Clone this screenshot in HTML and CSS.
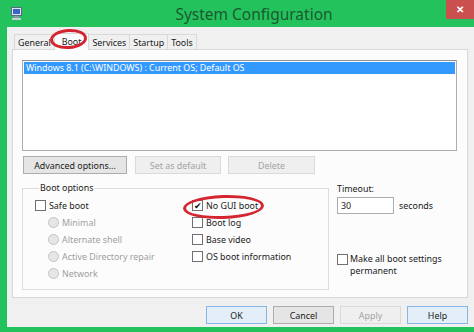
FILE: index.html
```html
<!DOCTYPE html>
<html lang="en">
<head>
    <meta charset="UTF-8">
    <title>System Configuration</title>
    <link rel="stylesheet" href="styles.css">
</head>
<body>
    <div class="window">
        <!-- Title bar -->
        <div class="titlebar">
            <svg class="app-icon" width="11" height="13" viewBox="0 0 11 13">
                <rect x="0.5" y="0.5" width="10" height="8" fill="#dfe6f0" stroke="#5a6a80"/>
                <rect x="2" y="2" width="7" height="5" fill="#3b64c8"/>
                <rect x="3" y="9" width="5" height="2" fill="#8c96a4"/>
                <rect x="1" y="11" width="9" height="2" fill="#c9cfd8"/>
            </svg>
            <div class="title">System Configuration</div>
            <div class="close">&#x2715;</div>
        </div>

        <div class="client">
            <div class="tabs">
                <div class="tab">General</div>
                <div class="tab active">Boot</div>
                <div class="tab">Services</div>
                <div class="tab">Startup</div>
                <div class="tab">Tools</div>
            </div>

            <div class="panel">
                <div class="listbox">
                    <div class="list-item selected">Windows 8.1 (C:\WINDOWS) : Current OS; Default OS</div>
                </div>

                <div class="button-row">
                    <button class="btn btn-advanced">Advanced options...</button>
                    <button class="btn btn-default" disabled>Set as default</button>
                    <button class="btn btn-delete" disabled>Delete</button>
                </div>

                <div class="options-row">
                    <fieldset class="groupbox">
                        <legend>Boot options</legend>
                        <div class="columns">
                            <div class="col col-left">
                                <div class="opt"><span class="check"></span>Safe boot</div>
                                <div class="opt sub disabled"><span class="radio"></span>Minimal</div>
                                <div class="opt sub disabled"><span class="radio"></span>Alternate shell</div>
                                <div class="opt sub disabled"><span class="radio"></span>Active Directory repair</div>
                                <div class="opt sub disabled"><span class="radio"></span>Network</div>
                            </div>
                            <div class="col col-right">
                                <div class="opt"><span class="check checked">&#x2714;</span>No GUI boot</div>
                                <div class="opt"><span class="check"></span>Boot log</div>
                                <div class="opt"><span class="check"></span>Base video</div>
                                <div class="opt"><span class="check"></span>OS boot information</div>
                            </div>
                        </div>
                    </fieldset>

                    <div class="side">
                        <div class="timeout-label">Timeout:</div>
                        <div class="timeout-row">
                            <div class="textbox">30</div>
                            <span>seconds</span>
                        </div>
                        <div class="permanent">
                            <span class="check"></span>
                            <span>Make all boot settings<br>permanent</span>
                        </div>
                    </div>
                </div>
            </div>

            <div class="footer">
                <button class="btn btn-foot btn-focus">OK</button>
                <button class="btn btn-foot">Cancel</button>
                <button class="btn btn-foot" disabled>Apply</button>
                <button class="btn btn-foot btn-focus">Help</button>
            </div>
        </div>

        <!-- red marks drawn over the screenshot -->
        <div class="mark mark-tab"></div>
        <div class="mark mark-nogui"></div>
    </div>
</body>
</html>
```

FILE: styles.css
```css
body {
    margin: 0;
    font-family: "Noto Sans", sans-serif;
    font-size: 8.9px;
    color: #1a1a1a;
}
.window {
    position: relative;
    width: 474px;
    height: 332px;
    background-color: #24c25c;
    box-sizing: border-box;
    padding: 0 0 5px 7px;
    overflow: hidden;
}
.titlebar {
    height: 27px;
    display: flex;
    align-items: flex-start;
    margin-left: -7px;
}
.app-icon {
    margin: 7px 0 0 11px;
}
.title {
    flex: 1;
    text-align: center;
    font-size: 15.5px;
    color: #1c5a30;
    padding-top: 3px;
    padding-left: 40px;
}
.close {
    width: 28px;
    height: 19px;
    background-color: #c9504f;
    color: #fff;
    font-size: 10px;
    font-weight: bold;
    text-align: center;
    line-height: 19px;
}
.client {
    background-color: #f0f0f0;
    height: 300px;
    padding: 6px 6px 0 5px;
    box-sizing: border-box;
}
.tabs {
    display: flex;
    padding-left: 2px;
    height: 16px;
    align-items: flex-end;
}
.tab {
    border: 1px solid #d9d9d9;
    border-bottom: none;
    background-color: #f0f0f0;
    height: 15px;
    line-height: 15px;
    padding: 0 3px;
    margin-right: -1px;
    box-sizing: border-box;
}
.tab.active {
    background-color: #fcfcfc;
    height: 17px;
    margin-bottom: -1px;
    padding: 0 7px;
    position: relative;
}
.panel {
    background-color: #fcfcfc;
    border: 1px solid #d9d9d9;
    height: 249px;
    box-sizing: border-box;
    padding: 10px 10px 0 9px;
}
.listbox {
    height: 91px;
    background-color: #fff;
    border: 1px solid #abadb3;
    border-top-color: #8c8f96;
    padding: 1px;
    box-sizing: border-box;
}
.list-item {
    height: 12px;
    line-height: 12px;
    padding-left: 2px;
}
.list-item.selected {
    background-color: #3399ff;
    color: #fff;
}
.button-row {
    display: flex;
    margin-top: 5px;
    padding-left: 1px;
}
.btn {
    font-family: inherit;
    font-size: 8.9px;
    height: 18px;
    padding: 0;
    background-color: #e5e5e5;
    border: 1px solid #adadad;
    color: #1a1a1a;
    box-sizing: border-box;
}
.btn:disabled {
    background-color: #efefef;
    border-color: #dadada;
    color: #a3a3a3;
}
.btn-advanced {
    width: 104px;
}
.btn-default {
    width: 86px;
    margin-left: 8px;
}
.btn-delete {
    width: 87px;
    margin-left: 7px;
}
.options-row {
    display: flex;
    margin-top: 8px;
}
.groupbox {
    width: 307px;
    height: 108px;
    margin: 0;
    padding: 3px 0 0 12px;
    border: 1px solid #dcdcdc;
    box-sizing: border-box;
}
.groupbox legend {
    padding: 0 1px;
    margin-left: 4px;
    line-height: 12px;
}
.columns {
    display: flex;
}
.col-left {
    width: 157px;
}
.opt {
    display: flex;
    align-items: center;
    height: 17px;
}
.opt.sub {
    padding-left: 13px;
}
.disabled {
    color: #a0a0a0;
}
.check {
    width: 11px;
    height: 11px;
    border: 1px solid #707070;
    background-color: #fff;
    box-sizing: border-box;
    margin-right: 3px;
    flex-shrink: 0;
    font-size: 9px;
    line-height: 9px;
    text-align: center;
    color: #111;
}
.radio {
    width: 11px;
    height: 11px;
    border: 1px solid #c4c4c4;
    border-radius: 50%;
    background-color: #e6e6e6;
    box-sizing: border-box;
    margin-right: 3px;
}
.side {
    padding-left: 8px;
    padding-top: 1px;
}
.timeout-label {
    line-height: 12px;
}
.timeout-row {
    display: flex;
    align-items: center;
    margin-top: 2px;
}
.textbox {
    width: 57px;
    height: 17px;
    border: 1px solid #abadb3;
    background-color: #fff;
    box-sizing: border-box;
    padding-left: 3px;
    line-height: 15px;
    margin-right: 5px;
}
.permanent {
    display: flex;
    align-items: flex-start;
    margin-top: 39px;
    line-height: 12px;
}
.permanent .check {
    margin-top: 1px;
    margin-right: 2px;
}
.footer {
    display: flex;
    justify-content: flex-end;
    margin-top: 8px;
    gap: 6px;
}
.btn-foot {
    width: 61px;
}
.btn-focus {
    background-color: #e4eef9;
    border-color: #86b6e6;
}
.mark {
    position: absolute;
    border: 3px solid #d42630;
    border-radius: 50%;
    box-sizing: border-box;
}
.mark-tab {
    left: 50px;
    top: 29px;
    width: 37px;
    height: 20px;
    transform: rotate(-4deg);
}
.mark-nogui {
    left: 183px;
    top: 195px;
    width: 81px;
    height: 24px;
    transform: rotate(-2deg);
}
```
